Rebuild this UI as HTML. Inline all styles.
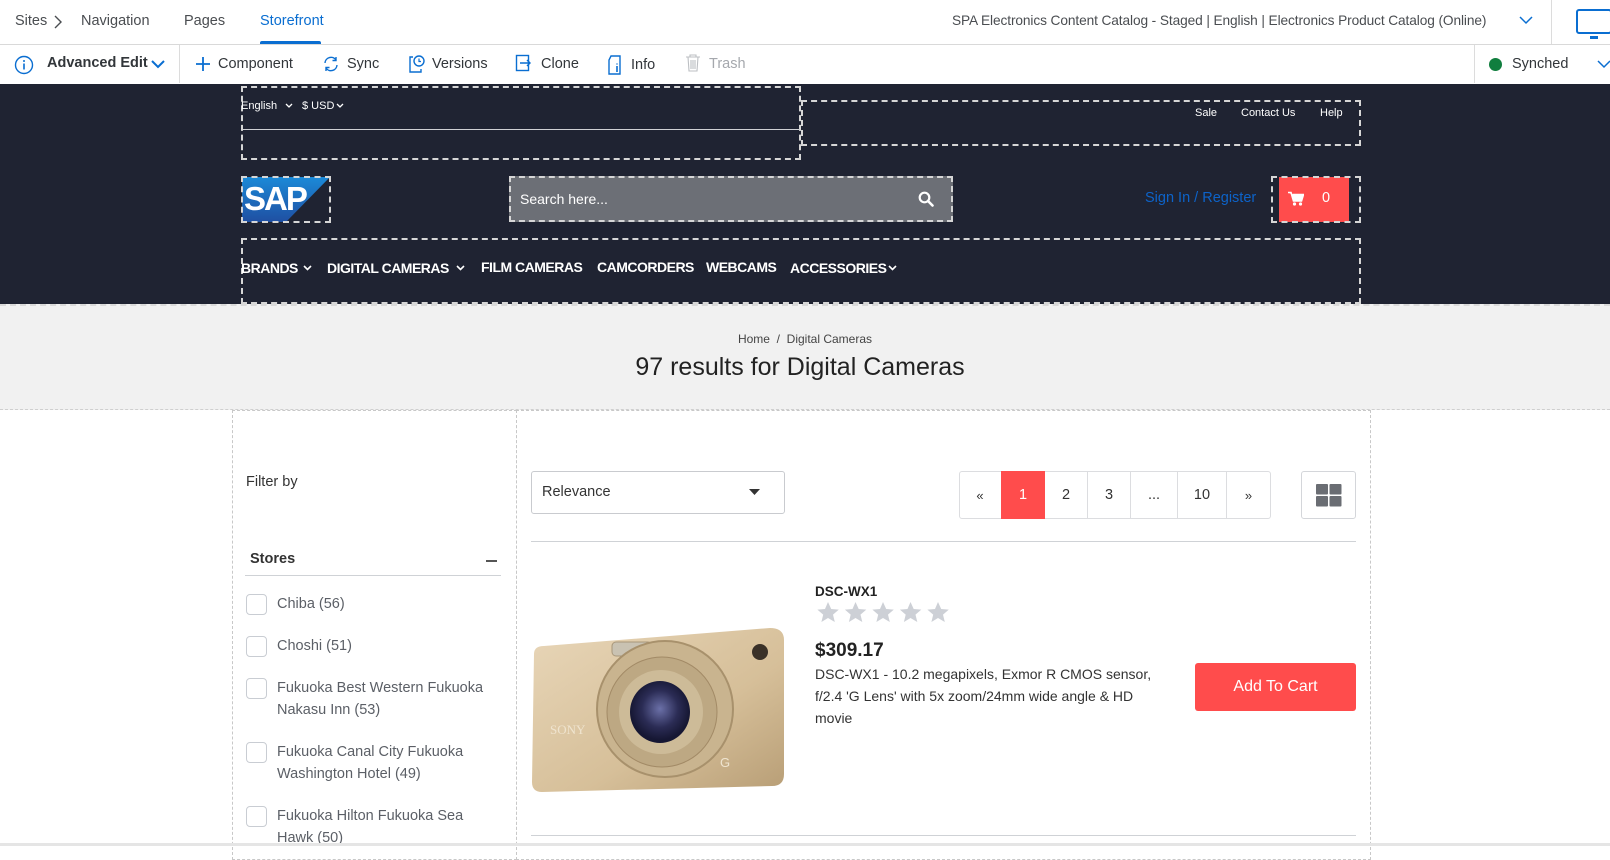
<!DOCTYPE html>
<html><head><meta charset="utf-8">
<style>
*{margin:0;padding:0;box-sizing:border-box}
body{width:1610px;height:846px;overflow:hidden;background:#fff;font-family:"Liberation Sans",sans-serif;position:relative;color:#32363a}
.a{position:absolute;white-space:nowrap}
.t{font-size:14px;color:#32363a}
.dash{position:absolute;border:2px dashed #d6d6d6}
.dashg{position:absolute;border:1px dashed #c8c8c8}
.w{color:#fff}
.cb{position:absolute;left:246px;width:21px;height:21px;border:1.5px solid #c9cdd3;border-radius:4px;background:#fff}
.lbl{position:absolute;left:277px;font-size:14.5px;color:#5b5f66;line-height:22px}
.pg{position:absolute;top:471px;height:48px;border:1px solid #dcdde0;border-left:none;font-size:14.5px;color:#333;display:flex;align-items:center;justify-content:center}
.nv{position:absolute;color:#fff;font-size:14px;font-weight:bold;letter-spacing:-0.5px;white-space:nowrap}
</style></head><body>

<!-- top bar -->
<div class="a t" style="left:15px;top:13px;font-size:14.5px;color:#4a4d51">Sites</div>
<svg class="a" style="left:53px;top:15px" width="10" height="14"><path d="M2 1l6 6-6 6" fill="none" stroke="#4a4d51" stroke-width="1.4"/></svg>
<div class="a t" style="left:81px;top:13px;font-size:14.5px;color:#4a4d51">Navigation</div>
<div class="a t" style="left:184px;top:13px;font-size:14.5px;color:#4a4d51">Pages</div>
<div class="a t" style="left:260px;top:13px;font-size:14.5px;color:#0a6ed1">Storefront</div>
<div class="a" style="left:260px;top:41px;width:61px;height:3px;background:#0a6ed1;border-radius:2px 2px 0 0"></div>
<div class="a t" style="left:952px;top:13px;font-size:13.7px;color:#4a4d51;letter-spacing:-0.1px">SPA Electronics Content Catalog - Staged | English | Electronics Product Catalog (Online)</div>
<svg class="a" style="left:1518px;top:14px" width="16" height="12"><path d="M2 3l6 6 6-6" fill="none" stroke="#0a6ed1" stroke-width="1.5"/></svg>
<div class="a" style="left:1551px;top:0;width:1px;height:44px;background:#dcdcdc"></div>
<div class="a" style="left:1576px;top:9px;width:36px;height:25px;border:2px solid #0a6ed1;border-radius:3px"></div>
<div class="a" style="left:1590px;top:36px;width:8px;height:3px;background:#0a6ed1"></div>
<div class="a" style="left:0;top:44px;width:1610px;height:1px;background:#d9d9d9"></div>

<!-- toolbar -->
<svg class="a" style="left:14px;top:55px" width="20" height="20"><circle cx="10" cy="10" r="8.5" fill="none" stroke="#0a6ed1" stroke-width="1.4"/><rect x="9.2" y="8.5" width="1.6" height="6" fill="#0a6ed1"/><circle cx="10" cy="6" r="1" fill="#0a6ed1"/></svg>
<div class="a" style="left:47px;top:55px;font-size:14.5px;font-weight:bold;color:#32363a">Advanced Edit</div>
<svg class="a" style="left:150px;top:58px" width="16" height="12"><path d="M2 3l6 6 6-6" fill="none" stroke="#0a6ed1" stroke-width="2"/></svg>
<div class="a" style="left:179px;top:45px;width:1px;height:38px;background:#dcdcdc"></div>
<svg class="a" style="left:195px;top:56px" width="16" height="16"><path d="M8 1v14M1 8h14" stroke="#0a6ed1" stroke-width="1.8"/></svg>
<div class="a t" style="left:218px;top:56px;font-size:14.5px">Component</div>
<svg class="a" style="left:322px;top:55px" width="18" height="18"><path d="M3 8a6 6 0 0 1 11-3M15 10a6 6 0 0 1-11 3" fill="none" stroke="#0a6ed1" stroke-width="1.4"/><path d="M14 2v3.5h-3.5M4 16v-3.5h3.5" fill="none" stroke="#0a6ed1" stroke-width="1.4"/></svg>
<div class="a t" style="left:347px;top:56px;font-size:14.5px">Sync</div>
<svg class="a" style="left:408px;top:54px" width="18" height="20"><path d="M5 3h-3v15h11v-3" fill="none" stroke="#0a6ed1" stroke-width="1.4"/><circle cx="11" cy="7" r="5" fill="none" stroke="#0a6ed1" stroke-width="1.4"/><path d="M11 4.5v3h2" fill="none" stroke="#0a6ed1" stroke-width="1.2"/></svg>
<div class="a t" style="left:432px;top:56px;font-size:14.5px">Versions</div>
<svg class="a" style="left:515px;top:54px" width="18" height="20"><rect x="1.5" y="1.5" width="12" height="15" fill="none" stroke="#0a6ed1" stroke-width="1.4"/><path d="M5 9h10M12 6l3 3-3 3" fill="none" stroke="#0a6ed1" stroke-width="1.4"/></svg>
<div class="a t" style="left:541px;top:56px;font-size:14.5px">Clone</div>
<svg class="a" style="left:607px;top:54px" width="16" height="22"><path d="M4 2h9v18h-11v-14z" fill="none" stroke="#0a6ed1" stroke-width="1.4"/><path d="M10 12v6M10 9.5v1" stroke="#0a6ed1" stroke-width="1.6"/></svg>
<div class="a t" style="left:631px;top:57px;font-size:14.5px">Info</div>
<svg class="a" style="left:685px;top:54px" width="16" height="18"><path d="M1 3h14M5 3v-2h6v2M3 3l1 14h8l1-14M6 6v9M8 6v9M10 6v9" fill="none" stroke="#bcbfc3" stroke-width="1.1"/></svg>
<div class="a t" style="left:709px;top:56px;font-size:14.5px;color:#a5a8ad">Trash</div>
<div class="a" style="left:1474px;top:45px;width:1px;height:38px;background:#dcdcdc"></div>
<div class="a" style="left:1489px;top:58px;width:13px;height:13px;border-radius:50%;background:#107e3e"></div>
<div class="a t" style="left:1512px;top:56px;font-size:14.5px">Synched</div>
<svg class="a" style="left:1596px;top:58px" width="16" height="12"><path d="M2 3l6 6 6-6" fill="none" stroke="#0a6ed1" stroke-width="1.5"/></svg>

<!-- dark header -->
<div class="a" style="left:0;top:84px;width:1610px;height:220px;background:#1f2332"></div>
<div class="dash" style="left:241px;top:86px;width:560px;height:74px"></div>
<div class="a w" style="left:241px;top:100px;font-size:11px">English</div>
<svg class="a" style="left:285px;top:103px" width="8" height="6"><path d="M1 1l3 3 3-3" fill="none" stroke="#fff" stroke-width="1.3"/></svg>
<div class="a w" style="left:302px;top:100px;font-size:11px">$ USD</div>
<svg class="a" style="left:336px;top:103px" width="8" height="6"><path d="M1 1l3 3 3-3" fill="none" stroke="#fff" stroke-width="1.3"/></svg>
<div class="a" style="left:243px;top:129px;width:557px;height:1px;background:#cfd0d4"></div>
<div class="dash" style="left:801px;top:100px;width:560px;height:46px"></div>
<div class="a w" style="left:1195px;top:107px;font-size:11px">Sale</div>
<div class="a w" style="left:1241px;top:107px;font-size:11px">Contact Us</div>
<div class="a w" style="left:1320px;top:107px;font-size:11px">Help</div>

<svg class="a" style="left:242px;top:177px" width="88" height="45"><defs><linearGradient id="g" x1="0" y1="0" x2="0" y2="1"><stop offset="0" stop-color="#1b8ad8"/><stop offset="1" stop-color="#1f4fa2"/></linearGradient></defs><path d="M0 0H88L44 45H0z" fill="url(#g)"/><text x="2" y="33" font-family="Liberation Sans" font-weight="bold" font-size="33" fill="#fff" letter-spacing="-2">SAP</text></svg>
<div class="dash" style="left:241px;top:176px;width:90px;height:47px;border-color:#d6d6d6"></div>

<div class="a" style="left:509px;top:176px;width:444px;height:46px;background:#6c6f76"></div>
<div class="dash" style="left:509px;top:176px;width:444px;height:46px"></div>
<div class="a w" style="left:520px;top:191px;font-size:14px">Search here...</div>
<svg class="a" style="left:918px;top:191px" width="16" height="16"><circle cx="6.5" cy="6.5" r="4.8" fill="none" stroke="#fff" stroke-width="2.2"/><path d="M10 10l4.5 4.5" stroke="#fff" stroke-width="2.6" stroke-linecap="round"/></svg>
<div class="a" style="left:1145px;top:190px;font-size:14.5px;color:#0d63c9">Sign In / Register</div>
<div class="a" style="left:1279px;top:177px;width:70px;height:45px;background:#ff4c4c"></div>
<div class="dash" style="left:1271px;top:176px;width:90px;height:47px"></div>
<svg class="a" style="left:1288px;top:191px" width="16" height="15"><path d="M0 1.5h3l2.5 8.5h8l2-6.5H4.5" fill="#fff" stroke="#fff" stroke-width="1.6"/><circle cx="6.5" cy="13" r="1.6" fill="#fff"/><circle cx="12.5" cy="13" r="1.6" fill="#fff"/></svg>
<div class="a w" style="left:1322px;top:190px;font-size:14.5px">0</div>

<div class="dash" style="left:241px;top:238px;width:1120px;height:66px"></div>
<div class="nv" style="left:241px;top:260px">BRANDS</div>
<div class="nv" style="left:327px;top:260px">DIGITAL CAMERAS</div>
<div class="nv" style="left:481px;top:259px">FILM CAMERAS</div>
<div class="nv" style="left:597px;top:259px">CAMCORDERS</div>
<div class="nv" style="left:706px;top:259px">WEBCAMS</div>
<div class="nv" style="left:790px;top:260px">ACCESSORIES</div>
<svg class="a" style="left:303px;top:265px" width="9" height="6"><path d="M1 1l3.5 3.5L8 1" fill="none" stroke="#fff" stroke-width="1.6"/></svg>
<svg class="a" style="left:456px;top:265px" width="9" height="6"><path d="M1 1l3.5 3.5L8 1" fill="none" stroke="#fff" stroke-width="1.6"/></svg>
<svg class="a" style="left:888px;top:265px" width="9" height="6"><path d="M1 1l3.5 3.5L8 1" fill="none" stroke="#fff" stroke-width="1.6"/></svg>

<!-- gray band -->
<div class="a" style="left:0;top:304px;width:1610px;height:106px;background:#f1f1f1;border-top:2px dashed #d9d9d9;border-bottom:1px dashed #cfcfcf"></div>
<div class="a" style="left:0;top:332px;width:1610px;text-align:center;font-size:12px;color:#444">Home&nbsp; / &nbsp;Digital Cameras</div>
<div class="a" style="left:0;top:353px;width:1600px;text-align:center;font-size:25px;color:#222">97 results for Digital Cameras</div>

<!-- containers -->
<div class="dashg" style="left:232px;top:410px;width:285px;height:450px"></div>
<div class="dashg" style="left:516px;top:410px;width:855px;height:450px;border-width:1.5px"></div>

<div class="a" style="left:246px;top:474px;font-size:14.5px;color:#333">Filter by</div>
<div class="a" style="left:250px;top:551px;font-size:14.5px;font-weight:bold;color:#333">Stores</div>
<div class="a" style="left:486px;top:560px;width:11px;height:2px;background:#555"></div>
<div class="a" style="left:245px;top:575px;width:256px;height:1px;background:#cfd2d6"></div>

<div class="cb" style="top:594px"></div><div class="lbl" style="top:593px">Chiba (56)</div>
<div class="cb" style="top:636px"></div><div class="lbl" style="top:635px">Choshi (51)</div>
<div class="cb" style="top:678px"></div><div class="lbl" style="top:677px">Fukuoka Best Western Fukuoka<br>Nakasu Inn (53)</div>
<div class="cb" style="top:742px"></div><div class="lbl" style="top:741px">Fukuoka Canal City Fukuoka<br>Washington Hotel (49)</div>
<div class="cb" style="top:806px"></div><div class="lbl" style="top:805px">Fukuoka Hilton Fukuoka Sea<br>Hawk (50)</div>

<div class="a" style="left:531px;top:471px;width:254px;height:43px;border:1px solid #c9cbcf;border-radius:3px"></div>
<div class="a" style="left:542px;top:484px;font-size:14.5px;color:#333">Relevance</div>
<svg class="a" style="left:749px;top:489px" width="11" height="7"><path d="M0 0h11L5.5 6z" fill="#333"/></svg>

<div class="a" style="left:959px;top:471px;width:312px;height:48px;border:1px solid #dcdde0;border-radius:3px"></div>
<div class="pg" style="left:959px;width:42px;border:none;font-size:13px">«</div>
<div class="pg" style="left:1001px;width:44px;background:#ff4c4c;color:#fff;border:none">1</div>
<div class="pg" style="left:1045px;width:43px;border-top:none;border-bottom:none">2</div>
<div class="pg" style="left:1088px;width:43px;border-top:none;border-bottom:none">3</div>
<div class="pg" style="left:1131px;width:47px;border-top:none;border-bottom:none">...</div>
<div class="pg" style="left:1178px;width:49px;border-top:none;border-bottom:none">10</div>
<div class="pg" style="left:1227px;width:43px;border:none;font-size:13px">»</div>

<div class="a" style="left:1301px;top:471px;width:55px;height:48px;border:1px solid #d4d6da;border-radius:3px"></div>
<svg class="a" style="left:1316px;top:484px" width="26" height="23"><rect x="0" y="0" width="12" height="10.5" rx="1" fill="#6a6d73"/><rect x="13.5" y="0" width="12" height="10.5" rx="1" fill="#6a6d73"/><rect x="0" y="12" width="12" height="10.5" rx="1" fill="#6a6d73"/><rect x="13.5" y="12" width="12" height="10.5" rx="1" fill="#6a6d73"/></svg>

<div class="a" style="left:531px;top:541px;width:825px;height:1px;background:#cfd2d6"></div>
<div class="a" style="left:531px;top:835px;width:825px;height:1px;background:#cfd2d6"></div>
<div class="a" style="left:0;top:843px;width:1610px;height:3px;background:#e5e5e5"></div>

<!-- camera -->
<svg class="a" style="left:530px;top:624px" width="256" height="170">
<defs><linearGradient id="c" x1="0" y1="0" x2="1" y2="1"><stop offset="0" stop-color="#e8d6b8"/><stop offset="0.6" stop-color="#d6bf99"/><stop offset="1" stop-color="#b89e76"/></linearGradient>
<radialGradient id="l" cx="0.5" cy="0.45" r="0.5"><stop offset="0" stop-color="#6b70a8"/><stop offset="0.6" stop-color="#2b2c55"/><stop offset="1" stop-color="#161733"/></radialGradient></defs>
<path d="M4 30 Q4 22 14 22 L240 4 Q254 4 254 16 L254 150 Q254 162 242 162 L12 168 Q2 168 2 158 Z" fill="url(#c)"/>
<rect x="82" y="18" width="40" height="14" rx="4" fill="#c9c2b2" stroke="#a8977a"/>
<circle cx="230" cy="28" r="8" fill="#3a3128"/>
<ellipse cx="135" cy="85" rx="68" ry="68" fill="#c9b48f" stroke="#a8916c" stroke-width="2"/>
<ellipse cx="132" cy="88" rx="55" ry="55" fill="#bda883" stroke="#a28a66"/>
<ellipse cx="131" cy="88" rx="42" ry="42" fill="#cdbb98"/>
<ellipse cx="130" cy="88" rx="30" ry="31" fill="url(#l)"/>
<text x="20" y="110" font-family="Liberation Serif" font-size="13" fill="#efe4cf">SONY</text>
<text x="190" y="143" font-family="Liberation Sans" font-size="13" fill="#efe4cf">G</text>
</svg>

<div class="a" style="left:815px;top:584px;font-size:13.5px;font-weight:bold;color:#222">DSC-WX1</div>
<svg class="a" style="left:817px;top:602px" width="135" height="22">
<g fill="#cdd0d6"><path id="s" d="M11 0l3.2 7 7.6.6-5.8 5 1.8 7.4L11 16l-6.6 4 1.8-7.4-5.8-5 7.6-.6z"/><use href="#s" x="27.5"/><use href="#s" x="55"/><use href="#s" x="82.5"/><use href="#s" x="110"/></g></svg>
<div class="a" style="left:815px;top:640px;font-size:19px;font-weight:bold;color:#222">$309.17</div>
<div class="a" style="left:815px;top:663px;font-size:14px;line-height:22px;color:#333;white-space:normal;width:340px">DSC-WX1 - 10.2 megapixels, Exmor R CMOS sensor, f/2.4 'G Lens' with 5x zoom/24mm wide angle &amp; HD movie</div>
<div class="a" style="left:1195px;top:663px;width:161px;height:48px;background:#ff4c4c;border-radius:3px;color:#fff;font-size:16px;display:flex;align-items:center;justify-content:center">Add To Cart</div>

</body></html>
